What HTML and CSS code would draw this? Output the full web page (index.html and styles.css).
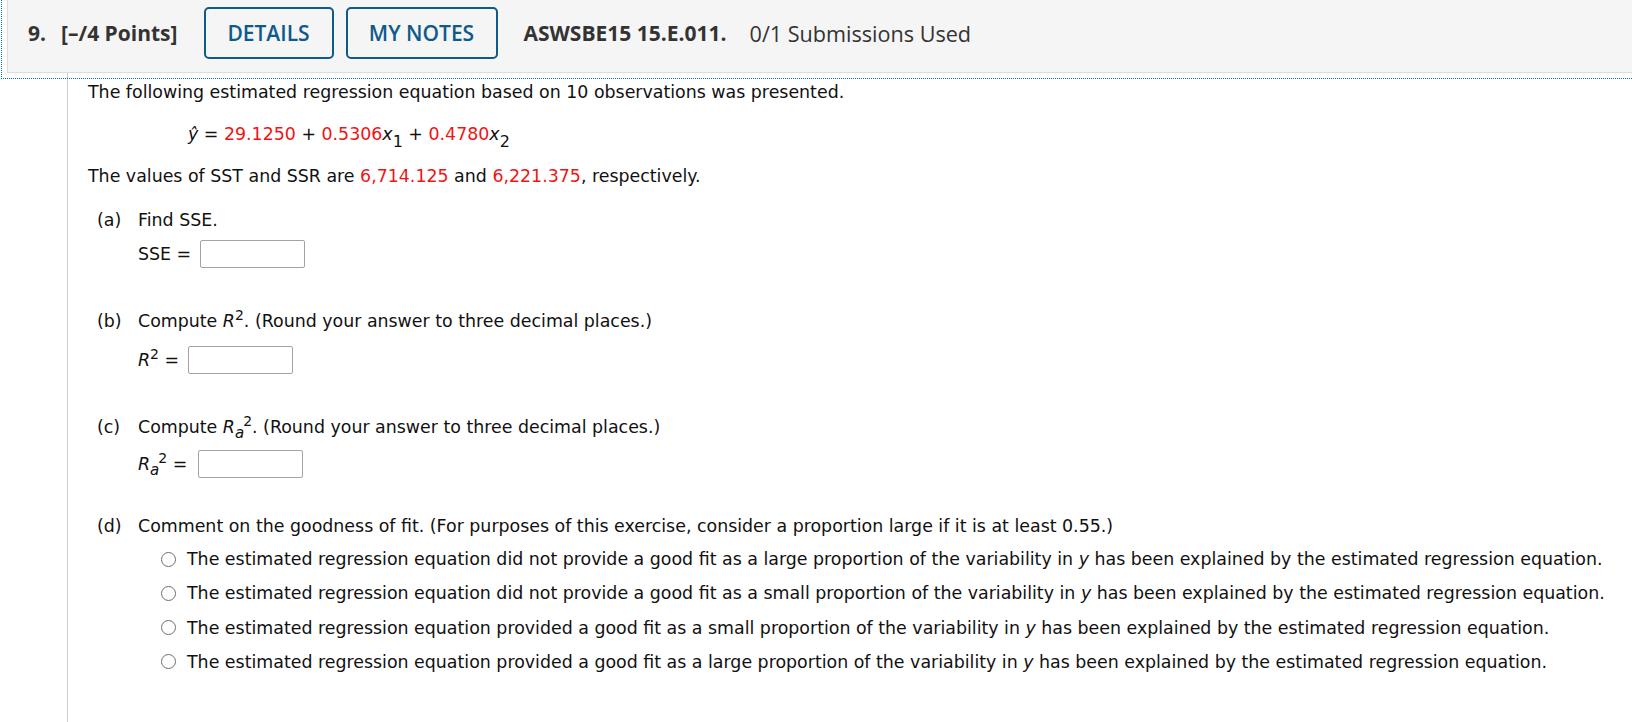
FILE: index.html
```html
<!DOCTYPE html>
<html lang="en">
<head>
<meta charset="utf-8">
<title>Question 9</title>
<link rel="stylesheet" href="styles.css">
</head>
<body>
<div class="question">
  <div class="qhead">
    <span class="qnum">9.</span>
    <span class="qpts">[–/4 Points]</span>
    <button class="btn btn-details" type="button">DETAILS</button>
    <button class="btn btn-notes" type="button">MY NOTES</button>
    <span class="qcode">ASWSBE15 15.E.011.</span>
    <span class="qsub">0/1 Submissions Used</span>
  </div>
  <div class="qbody">
    <p class="line intro">The following estimated regression equation based on 10 observations was presented.</p>
    <p class="line eq"><i class="var">ŷ</i> = <span class="red">29.1250</span> + <span class="red">0.5306</span><i class="var">x</i><sub class="sub">1</sub> + <span class="red">0.4780</span><i class="var">x</i><sub class="sub">2</sub></p>
    <p class="line values">The values of SST and SSR are <span class="red">6,714.125</span> and <span class="red">6,221.375</span>, respectively.</p>

    <div class="part part-a">
      <div class="line plabel"><span class="pl">(a)</span><span>Find SSE.</span></div>
      <div class="answer ans-a"><span class="alabel">SSE =</span><input class="box" type="text"></div>
    </div>

    <div class="part part-b">
      <div class="line plabel"><span class="pl">(b)</span><span>Compute <i class="var">R</i><sup class="sup">2</sup>. (Round your answer to three decimal places.)</span></div>
      <div class="answer ans-b"><span class="alabel"><i class="var">R</i><sup class="sup">2</sup> =</span><input class="box" type="text"></div>
    </div>

    <div class="part part-c">
      <div class="line plabel"><span class="pl">(c)</span><span>Compute <i class="var">R</i><sub class="suba">a</sub><sup class="sup2">2</sup>. (Round your answer to three decimal places.)</span></div>
      <div class="answer ans-c"><span class="alabel"><i class="var">R</i><sub class="suba">a</sub><sup class="sup2">2</sup> =</span><input class="box" type="text"></div>
    </div>

    <div class="part part-d">
      <div class="line plabel"><span class="pl">(d)</span><span>Comment on the goodness of fit. (For purposes of this exercise, consider a proportion large if it is at least 0.55.)</span></div>
      <ul class="choices">
        <li class="choice"><span class="radio"></span><span>The estimated regression equation did not provide a good fit as a large proportion of the variability in <i class="var">y</i> has been explained by the estimated regression equation.</span></li>
        <li class="choice"><span class="radio"></span><span>The estimated regression equation did not provide a good fit as a small proportion of the variability in <i class="var">y</i> has been explained by the estimated regression equation.</span></li>
        <li class="choice"><span class="radio"></span><span>The estimated regression equation provided a good fit as a small proportion of the variability in <i class="var">y</i> has been explained by the estimated regression equation.</span></li>
        <li class="choice"><span class="radio"></span><span>The estimated regression equation provided a good fit as a large proportion of the variability in <i class="var">y</i> has been explained by the estimated regression equation.</span></li>
      </ul>
    </div>
  </div>
</div>
</body>
</html>
```

FILE: styles.css
```css
html, body {
  margin: 0;
  padding: 0;
  background: #ffffff;
  overflow: hidden;
}

.question {
  width: 100%;
}

/* ---------- header ---------- */
.qhead {
  display: flex;
  align-items: center;
  margin: -6px -30px 0 7px;
  padding: 13px 0 13px 20px;
  background: #f5f5f5;
  border-left: 1px solid #dcdcdc;
  border-bottom: 1px solid #dcdcdc;
  outline: 1px dotted #0b63da;
  outline-offset: 5px;
  font-family: "Open Sans", "Liberation Sans", sans-serif;
  font-size: 21px;
  color: #333333;
  white-space: nowrap;
}

.qnum {
  font-weight: 700;
}

.qpts {
  font-weight: 700;
  margin-left: 15px;
}

.btn {
  box-sizing: border-box;
  height: 52px;
  margin: 0;
  padding: 0;
  background: transparent;
  border: 2px solid #0e5a8c;
  border-radius: 5px;
  color: #0e5a8c;
  font-family: "Open Sans", "Liberation Sans", sans-serif;
  font-size: 21px;
  font-weight: 600;
}

.btn-details {
  width: 130px;
  margin-left: 26px;
}

.btn-notes {
  width: 152px;
  margin-left: 12px;
}

.qcode {
  font-weight: 700;
  margin-left: 26px;
}

.qsub {
  margin-left: 23px;
  font-size: 21.6px;
}

/* ---------- body ---------- */
.qbody {
  box-sizing: border-box;
  min-height: calc(100vh - 73px);
  margin-left: 67px;
  padding: 9px 0 0 20px;
  border-left: 1px solid #cfcfcf;
  font-family: "DejaVu Sans", Verdana, sans-serif;
  font-size: 17.4px;
  color: #111111;
}

.line {
  margin: 0;
  line-height: 20px;
  white-space: nowrap;
}

.intro {
  margin-bottom: 22px;
}

.eq {
  margin-left: 100px;
  margin-bottom: 22px;
}

.values {
  margin-bottom: 24px;
}

.red {
  color: #f01414;
}

.var {
  font-style: italic;
}

.sub {
  font-size: 16px;
  line-height: 0;
  vertical-align: -7px;
}

.sup {
  font-size: 14px;
  line-height: 0;
  vertical-align: 7px;
}

.suba {
  font-size: 15px;
  font-style: italic;
  line-height: 0;
  vertical-align: -5px;
}

.sup2 {
  font-size: 14px;
  line-height: 0;
  vertical-align: 7px;
  margin-left: -1px;
}

/* parts */
.part {
  margin-left: 9px;
}

.plabel {
  display: flex;
}

.pl {
  width: 41px;
}

.answer {
  display: flex;
  align-items: center;
  margin-left: 41px;
  line-height: 20px;
  white-space: nowrap;
}

.alabel {
  margin-right: 9px;
}

.ans-c .alabel {
  margin-right: 11px;
}

.box {
  box-sizing: border-box;
  width: 105px;
  height: 28px;
  margin: 0;
  border: 1px solid #a3a3a3;
  border-radius: 2px;
  background: #ffffff;
}

.part-a .plabel { margin-bottom: 10px; }
.part-a { margin-bottom: 43px; }

.part-b .plabel { margin-bottom: 15px; }
.part-b { margin-bottom: 43px; }

.part-c .plabel { margin-bottom: 13px; }
.part-c { margin-bottom: 38px; }

.part-d .plabel { margin-bottom: 13px; }

.choices {
  list-style: none;
  margin: 0 0 0 64px;
  padding: 0;
  display: flex;
  flex-direction: column;
  gap: 14.3px;
}

.choice {
  display: flex;
  align-items: center;
  line-height: 20px;
  white-space: nowrap;
}

.radio {
  box-sizing: border-box;
  flex: none;
  width: 15px;
  height: 15px;
  margin-right: 11px;
  border: 1px solid #6e6e6e;
  border-radius: 50%;
  background: #ffffff;
}
```
